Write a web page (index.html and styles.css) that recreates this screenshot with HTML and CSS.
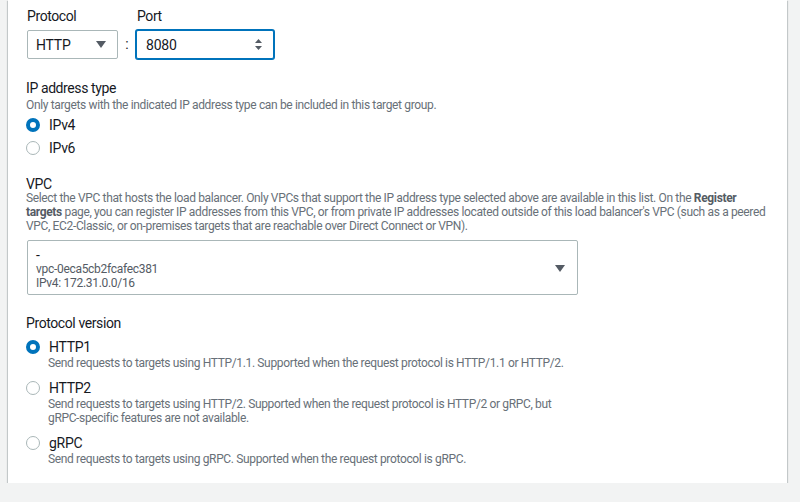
FILE: index.html
```html
<!DOCTYPE html>
<html lang="en">
<head>
  <meta charset="UTF-8" />
  <meta name="viewport" content="width=device-width, initial-scale=1.0"/>
  <title>Target group settings</title>
  <link rel="stylesheet" href="styles.css">
</head>
<body>
  <div class="container">

    <div class="proto-row">
      <div class="field">
        <div class="label">Protocol</div>
        <div class="select small">
          <span>HTTP</span>
          <svg class="caret" width="10" height="7" viewBox="0 0 10 7"><path d="M0 0h10L5 7z" fill="#545b64"/></svg>
        </div>
      </div>
      <div class="colon">:</div>
      <div class="field">
        <div class="label">Port</div>
        <div class="input focused">
          <span>8080</span>
          <svg class="spinner" width="7" height="11" viewBox="0 0 7 11"><path d="M3.5 0L7 4H0z M3.5 11L0 7h7z" fill="#545b64"/></svg>
        </div>
      </div>
    </div>

    <div class="section ip">
      <div class="heading">IP address type</div>
      <div class="desc">Only targets with the indicated IP address type can be included in this target group.</div>
      <div class="radio-group">
        <div class="radio-item">
          <span class="radio checked"></span>
          <div class="radio-text"><div class="radio-label">IPv4</div></div>
        </div>
        <div class="radio-item">
          <span class="radio"></span>
          <div class="radio-text"><div class="radio-label">IPv6</div></div>
        </div>
      </div>
    </div>

    <div class="section vpc">
      <div class="heading">VPC</div>
      <div class="desc">Select the VPC that hosts the load balancer. Only VPCs that support the IP address type selected above are available in this list. On the <b>Register</b><br><b>targets</b> page, you can register IP addresses from this VPC, or from private IP addresses located outside of this load balancer's VPC (such as a peered<br>VPC, EC2-Classic, or on-premises targets that are reachable over Direct Connect or VPN).</div>
      <div class="select large">
        <div class="option">
          <div class="option-label">-</div>
          <div class="option-desc">vpc-0eca5cb2fcafec381</div>
          <div class="option-desc">IPv4: 172.31.0.0/16</div>
        </div>
        <svg class="caret" width="10" height="7" viewBox="0 0 10 7"><path d="M0 0h10L5 7z" fill="#545b64"/></svg>
      </div>
    </div>

    <div class="section version">
      <div class="heading">Protocol version</div>
      <div class="radio-group tall">
        <div class="radio-item">
          <span class="radio checked"></span>
          <div class="radio-text">
            <div class="radio-label">HTTP1</div>
            <div class="desc">Send requests to targets using HTTP/1.1. Supported when the request protocol is HTTP/1.1 or HTTP/2.</div>
          </div>
        </div>
        <div class="radio-item">
          <span class="radio"></span>
          <div class="radio-text">
            <div class="radio-label">HTTP2</div>
            <div class="desc">Send requests to targets using HTTP/2. Supported when the request protocol is HTTP/2 or gRPC, but<br>gRPC-specific features are not available.</div>
          </div>
        </div>
        <div class="radio-item">
          <span class="radio"></span>
          <div class="radio-text">
            <div class="radio-label">gRPC</div>
            <div class="desc">Send requests to targets using gRPC. Supported when the request protocol is gRPC.</div>
          </div>
        </div>
      </div>
    </div>

  </div>
</body>
</html>
```

FILE: styles.css
```css
* {
  box-sizing: border-box;
}

body {
  font-family: Roboto, 'Liberation Sans', Arial, sans-serif;
  background: #f2f3f3;
  color: #16191f;
  margin: 0;
  padding: 0 13px 0 8px;
}

.container {
  background: white;
  padding: 6px 8px 17px 18px;
  box-shadow: 0 1px 1px 0 rgba(0, 28, 36, 0.3), 1px 1px 1px 0 rgba(0, 28, 36, 0.15), -1px 1px 1px 0 rgba(0, 28, 36, 0.15);
}

.proto-row {
  display: flex;
  align-items: flex-end;
}

.label {
  font-size: 14px;
  line-height: 20px;
  letter-spacing: -0.4px;
  margin-bottom: 4px;
  padding-left: 1px;
}

.colon {
  width: 18px;
  text-align: center;
  font-size: 14px;
  line-height: 29px;
}

.select, .input {
  display: flex;
  align-items: center;
  justify-content: space-between;
  border: 1px solid #aab7b8;
  border-radius: 2px;
  font-size: 14px;
  letter-spacing: -0.2px;
  background: white;
}

.select.small {
  width: 91px;
  height: 29px;
  margin-left: 1px;
  padding: 0 11px 0 8px;
}

.input {
  width: 138px;
  height: 29px;
  padding: 0 11px 0 9px;
}

.input.focused {
  border-color: #0073bb;
  box-shadow: 0 0 0 1px #0073bb;
}

.heading {
  font-size: 14px;
  line-height: 18px;
  letter-spacing: -0.4px;
}

.desc {
  font-size: 12px;
  line-height: 14px;
  letter-spacing: -0.35px;
  color: #687078;
}

.desc b {
  color: #545b64;
}

/* IP address type */
.ip {
  margin-top: 19px;
}

.ip .heading {
  line-height: 20px;
}

.radio-group {
  display: flex;
  flex-direction: column;
  gap: 3px;
  margin-top: 3px;
}

.radio-item {
  display: flex;
  align-items: flex-start;
}

.radio {
  width: 14px;
  height: 14px;
  margin-top: 3px;
  margin-right: 8px;
  border: 1px solid #aab7b8;
  border-radius: 50%;
  flex-shrink: 0;
}

.radio.checked {
  border: 4px solid #0073bb;
}

.radio-label {
  font-size: 14px;
  line-height: 20px;
  letter-spacing: -0.3px;
  padding-left: 1px;
}

.radio-text .desc {
  margin-top: -1px;
}

/* VPC */
.vpc {
  margin-top: 19px;
}

.vpc .heading {
  line-height: 14px;
}

.select.large {
  width: 551px;
  height: 55px;
  margin-top: 7px;
  margin-left: 1px;
  padding: 6px 12px 4px 8px;
}

.option-label {
  font-size: 14px;
  line-height: 14px;
}

.option-desc {
  font-size: 12px;
  line-height: 14px;
  letter-spacing: -0.3px;
  color: #545b64;
}

/* Protocol version */
.version {
  margin-top: 19px;
}

.version .radio-group {
  margin-top: 5px;
}

.radio-group.tall {
  gap: 8px;
}
```
